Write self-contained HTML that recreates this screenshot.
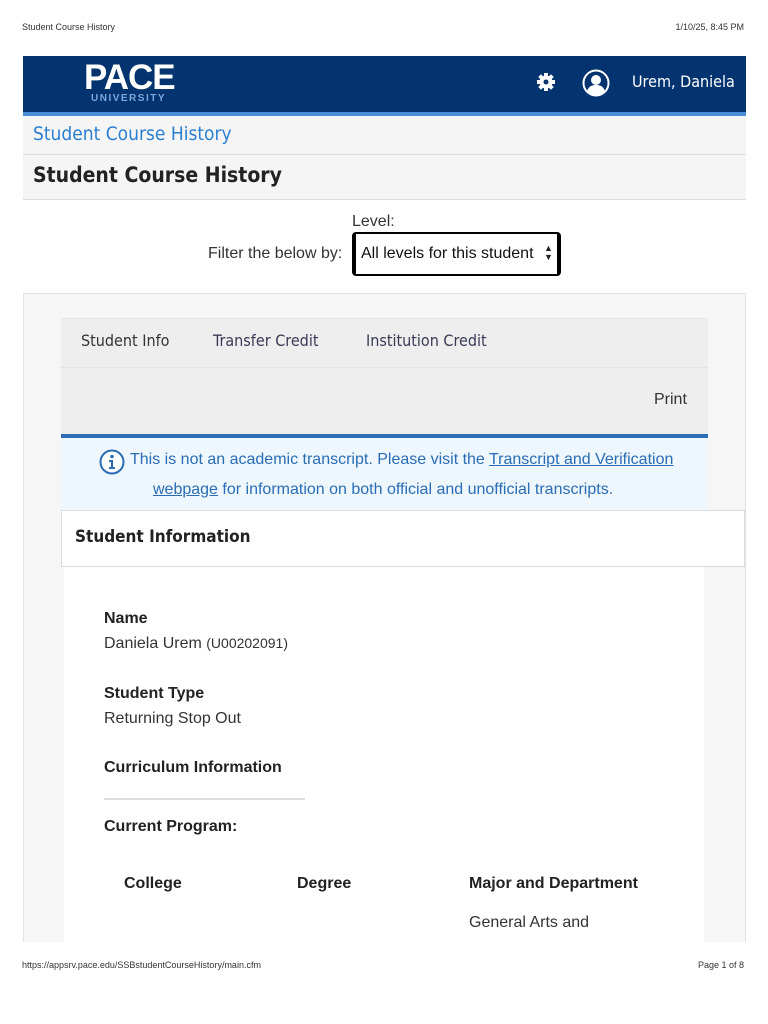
<!DOCTYPE html>
<html><head><meta charset="utf-8"><style>
*{margin:0;padding:0;box-sizing:border-box}
body{width:768px;height:1024px;background:#fff;position:relative;overflow:hidden;font-family:"Liberation Sans",sans-serif;color:#222}
.a{position:absolute;white-space:nowrap}
.sm{font-size:9px;color:#333}
.b{font-weight:bold;font-size:16px;color:#222}
.t{font-size:16px;color:#333}
.ds{font-family:"DejaVu Sans Condensed","DejaVu Sans",sans-serif}
</style></head><body>
<div class="a sm" style="left:22px;top:22px">Student Course History</div>
<div class="a sm" style="right:24px;top:22px">1/10/25, 8:45 PM</div>

<div class="a" style="left:23px;top:56px;width:723px;height:56px;background:#04346f"></div>
<div class="a" style="left:23px;top:112px;width:723px;height:4px;background:#4a8fd6"></div>
<div class="a" style="left:84px;top:58px;font-size:35px;font-weight:bold;color:#fff;letter-spacing:-1px">PACE</div>
<div class="a" style="left:91px;top:93px;font-size:10px;font-weight:bold;color:#7ea6da;letter-spacing:1.5px">UNIVERSITY</div>
<svg class="a" style="left:536px;top:72px" width="20" height="20" viewBox="0 0 20 20"><g fill="#fff"><circle cx="10" cy="10" r="6.5"/><rect x="8" y="1" width="4" height="18"/><rect x="1" y="8" width="18" height="4"/><rect x="8" y="1" width="4" height="18" transform="rotate(45 10 10)"/><rect x="8" y="1" width="4" height="18" transform="rotate(-45 10 10)"/></g><circle cx="10" cy="10" r="2.5" fill="#04346f"/></svg>
<svg class="a" style="left:582px;top:69px" width="28" height="28" viewBox="0 0 28 28"><circle cx="14" cy="14" r="12.5" fill="none" stroke="#fff" stroke-width="2"/><circle cx="14" cy="11" r="5" fill="#fff"/><path d="M5 22c2-5 5-6 9-6s7 1 9 6c-2 3-5 4-9 4s-7-1-9-4z" fill="#fff"/></svg>
<div class="a ds" style="left:632px;top:72px;font-size:16px;color:#fff">Urem, Daniela</div>

<div class="a" style="left:23px;top:116px;width:723px;height:84px;background:#f5f5f5;border-bottom:1px solid #ddd"></div>
<div class="a" style="left:23px;top:154px;width:723px;height:1px;background:#ddd"></div>
<div class="a ds" style="left:33px;top:123px;font-size:19px;color:#2a7fd0">Student Course History</div>
<div class="a ds" style="left:33px;top:163px;font-size:21px;color:#222;font-weight:bold">Student Course History</div>

<div class="a" style="left:352px;top:213px;font-size:16px;color:#333">Level:</div>
<div class="a" style="left:208px;top:245px;font-size:16px;color:#333">Filter the below by:</div>
<div class="a" style="left:352px;top:232px;width:209px;height:44px;border:2px solid #000;border-left-width:4px;border-right-width:4px;border-radius:4px;background:#fff"></div>
<div class="a" style="left:361px;top:245px;font-size:16px;color:#111">All levels for this student</div>
<div class="a" style="left:544px;top:244px;font-size:9px;line-height:9px;color:#222">▲<br>▼</div>

<div class="a" style="left:23px;top:293px;width:723px;height:650px;background:#f6f6f6;border:1px solid #e2e2e2;border-bottom:none"></div>
<div class="a" style="left:61px;top:318px;width:647px;height:117px;background:#eeeeee"></div>
<div class="a" style="left:61px;top:318px;width:647px;height:1px;background:#e4e4e4"></div>
<div class="a" style="left:61px;top:367px;width:647px;height:1px;background:#e2e2e2"></div>
<div class="a ds" style="left:81px;top:331px;font-size:16px;color:#333">Student Info</div>
<div class="a ds" style="left:213px;top:331px;font-size:16px;color:#3a3a55">Transfer Credit</div>
<div class="a ds" style="left:366px;top:331px;font-size:16px;color:#3a3a55">Institution Credit</div>
<div class="a" style="left:654px;top:391px;font-size:16px;color:#333">Print</div>
<div class="a" style="left:61px;top:434px;width:647px;height:4px;background:#2a6db5"></div>
<div class="a" style="left:61px;top:438px;width:647px;height:74px;background:#eef6fe"></div>
<svg class="a" style="left:99px;top:449px" width="26" height="26" viewBox="0 0 26 26"><circle cx="13" cy="13" r="11.5" fill="#fff" stroke="#2a6db5" stroke-width="2"/><circle cx="13" cy="7.5" r="1.8" fill="#2a6db5"/><path d="M10 11h4v7h2v2h-6v-2h2v-5h-2z" fill="#2a6db5"/></svg>
<div class="a" style="left:130px;top:451px;font-size:16px;color:#2a6db5">This is not an academic transcript. Please visit the <u>Transcript and Verification</u></div>
<div class="a" style="left:153px;top:481px;font-size:16px;color:#2a6db5"><u>webpage</u> for information on both official and unofficial transcripts.</div>

<div class="a" style="left:64px;top:566px;width:640px;height:380px;background:#fff"></div>
<div class="a" style="left:61px;top:510px;width:684px;height:57px;background:#fff;border:1px solid #dcdcdc"></div>
<div class="a ds" style="left:75px;top:527px;font-size:17px;color:#222;font-weight:bold">Student Information</div>

<div class="a b" style="left:104px;top:610px">Name</div>
<div class="a t" style="left:104px;top:635px">Daniela Urem <span style="font-size:14px">(U00202091)</span></div>
<div class="a b" style="left:104px;top:685px">Student Type</div>
<div class="a t" style="left:104px;top:710px">Returning Stop Out</div>
<div class="a b" style="left:104px;top:759px">Curriculum Information</div>
<div class="a" style="left:104px;top:798px;width:201px;height:2px;background:#ddd"></div>
<div class="a b" style="left:104px;top:818px">Current Program:</div>
<div class="a b" style="left:124px;top:875px">College</div>
<div class="a b" style="left:297px;top:875px">Degree</div>
<div class="a b" style="left:469px;top:875px">Major and Department</div>
<div class="a t" style="left:469px;top:914px">General Arts and</div>

<div class="a" style="left:0;top:942px;width:768px;height:82px;background:#fff"></div>
<div class="a sm" style="left:22px;top:960px">https://appsrv.pace.edu/SSBstudentCourseHistory/main.cfm</div>
<div class="a sm" style="right:24px;top:960px">Page 1 of 8</div>
</body></html>
